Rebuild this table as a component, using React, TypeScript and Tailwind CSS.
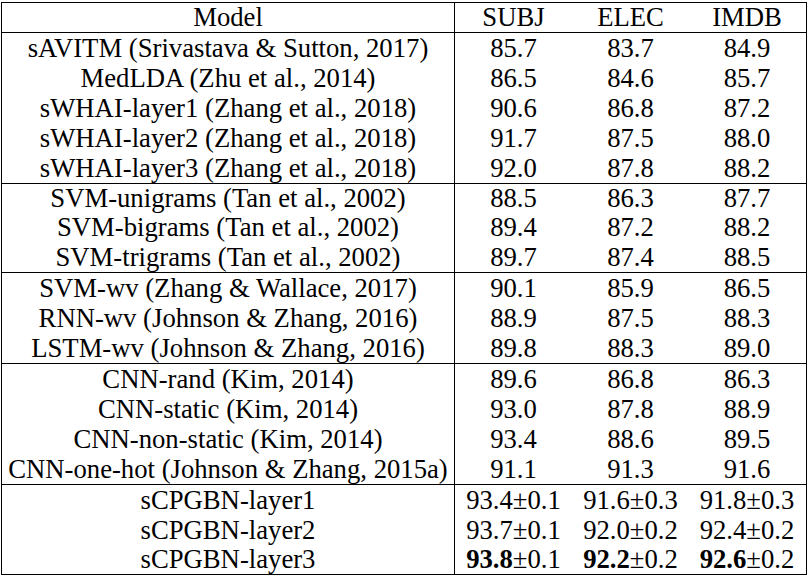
type Cell = string | { bold: string; rest: string };

interface Row {
  model: string;
  values: Cell[];
  h?: string;
}

const groups: Row[][] = [
  [
    { model: "sAVITM (Srivastava & Sutton, 2017)", values: ["85.7", "83.7", "84.9"] },
    { model: "MedLDA (Zhu et al., 2014)", values: ["86.5", "84.6", "85.7"] },
    { model: "sWHAI-layer1 (Zhang et al., 2018)", values: ["90.6", "86.8", "87.2"] },
    { model: "sWHAI-layer2 (Zhang et al., 2018)", values: ["91.7", "87.5", "88.0"] },
    { model: "sWHAI-layer3 (Zhang et al., 2018)", values: ["92.0", "87.8", "88.2"] },
  ],
  [
    { model: "SVM-unigrams (Tan et al., 2002)", values: ["88.5", "86.3", "87.7"], h: "h-[29px]" },
    { model: "SVM-bigrams (Tan et al., 2002)", values: ["89.4", "87.2", "88.2"], h: "h-[29px]" },
    { model: "SVM-trigrams (Tan et al., 2002)", values: ["89.7", "87.4", "88.5"] },
  ],
  [
    { model: "SVM-wv (Zhang & Wallace, 2017)", values: ["90.1", "85.9", "86.5"] },
    { model: "RNN-wv (Johnson & Zhang, 2016)", values: ["88.9", "87.5", "88.3"] },
    { model: "LSTM-wv (Johnson & Zhang, 2016)", values: ["89.8", "88.3", "89.0"] },
  ],
  [
    { model: "CNN-rand (Kim, 2014)", values: ["89.6", "86.8", "86.3"] },
    { model: "CNN-static (Kim, 2014)", values: ["93.0", "87.8", "88.9"] },
    { model: "CNN-non-static (Kim, 2014)", values: ["93.4", "88.6", "89.5"] },
    { model: "CNN-one-hot (Johnson & Zhang, 2015a)", values: ["91.1", "91.3", "91.6"] },
  ],
  [
    { model: "sCPGBN-layer1", values: ["93.4±0.1", "91.6±0.3", "91.8±0.3"] },
    { model: "sCPGBN-layer2", values: ["93.7±0.1", "92.0±0.2", "92.4±0.2"] },
    {
      model: "sCPGBN-layer3",
      values: [
        { bold: "93.8", rest: "±0.1" },
        { bold: "92.2", rest: "±0.2" },
        { bold: "92.6", rest: "±0.2" },
      ],
      h: "h-[29px]",
    },
  ],
];

const colWidths = ["w-[117px]", "w-[117px]", "w-[116px]"];

const renderCell = (cell: Cell) =>
  typeof cell === "string" ? (
    cell
  ) : (
    <>
      <b className="font-bold">{cell.bold}</b>
      {cell.rest}
    </>
  );

const TableRow = ({ model, values, h = "h-[30px]" }: Row) => (
  <div className={`flex ${h}`}>
    <div className="w-[453px] shrink-0 border-r border-black flex items-center justify-center whitespace-nowrap">
      {model}
    </div>
    {values.map((v, i) => (
      <div
        key={i}
        className={`${colWidths[i]} shrink-0 flex items-center justify-center whitespace-nowrap`}
      >
        {renderCell(v)}
      </div>
    ))}
  </div>
);

const App = () => (
  <div className="w-[808px] h-[579px] bg-white pt-[2px] pl-px text-black font-['Liberation_Serif',serif] text-[26.7px] leading-none">
    <div className="w-[806px] border border-black flex flex-col">
      <TableRow model="Model" values={["SUBJ", "ELEC", "IMDB"]} h="h-[29px]" />
      {groups.map((rows, gi) => (
        <div key={gi} className="border-t border-black flex flex-col">
          {rows.map((row) => (
            <TableRow key={row.model} {...row} />
          ))}
        </div>
      ))}
    </div>
  </div>
);

export default App;
